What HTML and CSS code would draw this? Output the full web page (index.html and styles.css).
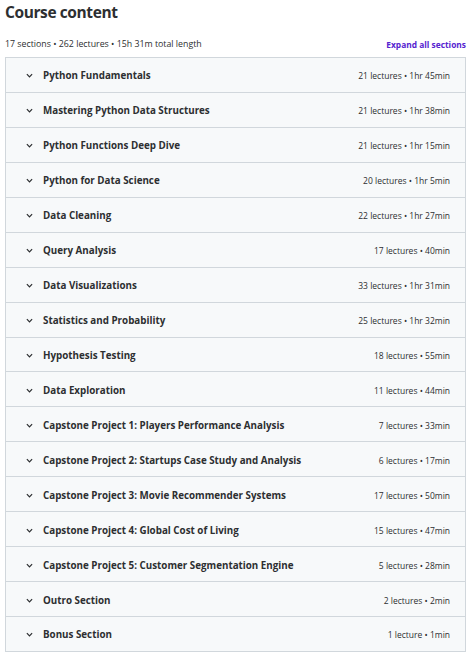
FILE: index.html
```html
<!DOCTYPE html>
<html lang="en">
<head>
<meta charset="utf-8">
<title>Course content</title>
<link rel="stylesheet" href="styles.css">
</head>
<body>
<div class="page">
  <h2 class="title">Course content</h2>
  <div class="summary">
    <span class="stats">17 sections • 262 lectures • 15h 31m total length</span>
    <button class="expand">Expand all sections</button>
  </div>
  <div class="sections">
    <div class="row"><span class="chev"><svg viewBox="0 0 8 5" width="7" height="5"><path d="M1 1l3 3 3-3" fill="none" stroke="#2d2f31" stroke-width="1.4"/></svg></span><span class="name">Python Fundamentals</span><span class="meta">21 lectures • 1hr 45min</span></div>
    <div class="row"><span class="chev"><svg viewBox="0 0 8 5" width="7" height="5"><path d="M1 1l3 3 3-3" fill="none" stroke="#2d2f31" stroke-width="1.4"/></svg></span><span class="name">Mastering Python Data Structures</span><span class="meta">21 lectures • 1hr 38min</span></div>
    <div class="row"><span class="chev"><svg viewBox="0 0 8 5" width="7" height="5"><path d="M1 1l3 3 3-3" fill="none" stroke="#2d2f31" stroke-width="1.4"/></svg></span><span class="name">Python Functions Deep Dive</span><span class="meta">21 lectures • 1hr 15min</span></div>
    <div class="row"><span class="chev"><svg viewBox="0 0 8 5" width="7" height="5"><path d="M1 1l3 3 3-3" fill="none" stroke="#2d2f31" stroke-width="1.4"/></svg></span><span class="name">Python for Data Science</span><span class="meta">20 lectures • 1hr 5min</span></div>
    <div class="row"><span class="chev"><svg viewBox="0 0 8 5" width="7" height="5"><path d="M1 1l3 3 3-3" fill="none" stroke="#2d2f31" stroke-width="1.4"/></svg></span><span class="name">Data Cleaning</span><span class="meta">22 lectures • 1hr 27min</span></div>
    <div class="row"><span class="chev"><svg viewBox="0 0 8 5" width="7" height="5"><path d="M1 1l3 3 3-3" fill="none" stroke="#2d2f31" stroke-width="1.4"/></svg></span><span class="name">Query Analysis</span><span class="meta">17 lectures • 40min</span></div>
    <div class="row"><span class="chev"><svg viewBox="0 0 8 5" width="7" height="5"><path d="M1 1l3 3 3-3" fill="none" stroke="#2d2f31" stroke-width="1.4"/></svg></span><span class="name">Data Visualizations</span><span class="meta">33 lectures • 1hr 31min</span></div>
    <div class="row"><span class="chev"><svg viewBox="0 0 8 5" width="7" height="5"><path d="M1 1l3 3 3-3" fill="none" stroke="#2d2f31" stroke-width="1.4"/></svg></span><span class="name">Statistics and Probability</span><span class="meta">25 lectures • 1hr 32min</span></div>
    <div class="row"><span class="chev"><svg viewBox="0 0 8 5" width="7" height="5"><path d="M1 1l3 3 3-3" fill="none" stroke="#2d2f31" stroke-width="1.4"/></svg></span><span class="name">Hypothesis Testing</span><span class="meta">18 lectures • 55min</span></div>
    <div class="row"><span class="chev"><svg viewBox="0 0 8 5" width="7" height="5"><path d="M1 1l3 3 3-3" fill="none" stroke="#2d2f31" stroke-width="1.4"/></svg></span><span class="name">Data Exploration</span><span class="meta">11 lectures • 44min</span></div>
    <div class="row"><span class="chev"><svg viewBox="0 0 8 5" width="7" height="5"><path d="M1 1l3 3 3-3" fill="none" stroke="#2d2f31" stroke-width="1.4"/></svg></span><span class="name">Capstone Project 1: Players Performance Analysis</span><span class="meta">7 lectures • 33min</span></div>
    <div class="row"><span class="chev"><svg viewBox="0 0 8 5" width="7" height="5"><path d="M1 1l3 3 3-3" fill="none" stroke="#2d2f31" stroke-width="1.4"/></svg></span><span class="name">Capstone Project 2: Startups Case Study and Analysis</span><span class="meta">6 lectures • 17min</span></div>
    <div class="row"><span class="chev"><svg viewBox="0 0 8 5" width="7" height="5"><path d="M1 1l3 3 3-3" fill="none" stroke="#2d2f31" stroke-width="1.4"/></svg></span><span class="name">Capstone Project 3: Movie Recommender Systems</span><span class="meta">17 lectures • 50min</span></div>
    <div class="row"><span class="chev"><svg viewBox="0 0 8 5" width="7" height="5"><path d="M1 1l3 3 3-3" fill="none" stroke="#2d2f31" stroke-width="1.4"/></svg></span><span class="name">Capstone Project 4: Global Cost of Living</span><span class="meta">15 lectures • 47min</span></div>
    <div class="row"><span class="chev"><svg viewBox="0 0 8 5" width="7" height="5"><path d="M1 1l3 3 3-3" fill="none" stroke="#2d2f31" stroke-width="1.4"/></svg></span><span class="name">Capstone Project 5: Customer Segmentation Engine</span><span class="meta">5 lectures • 28min</span></div>
    <div class="row"><span class="chev"><svg viewBox="0 0 8 5" width="7" height="5"><path d="M1 1l3 3 3-3" fill="none" stroke="#2d2f31" stroke-width="1.4"/></svg></span><span class="name">Outro Section</span><span class="meta">2 lectures • 2min</span></div>
    <div class="row"><span class="chev"><svg viewBox="0 0 8 5" width="7" height="5"><path d="M1 1l3 3 3-3" fill="none" stroke="#2d2f31" stroke-width="1.4"/></svg></span><span class="name">Bonus Section</span><span class="meta">1 lecture • 1min</span></div>
  </div>
</div>
</body>
</html>
```

FILE: styles.css
```css
* { box-sizing: border-box; }
html, body { margin: 0; padding: 0; background: #fff; }
body {
  font-family: "Open Sans", "Noto Sans", "Liberation Sans", sans-serif;
  color: #2d2f31;
}
.page { padding: 0 8px 0 5px; }
.title {
  margin: 0;
  padding-top: 1px;
  font-size: 15.5px;
  letter-spacing: -0.4px;
  font-weight: 700;
  line-height: 22px;
  height: 36px;
}
.summary {
  display: flex;
  justify-content: space-between;
  align-items: center;
  height: 16px;
  margin-bottom: 5px;
}
.stats { font-size: 8.8px; color: #2d2f31; }
.expand {
  border: 0;
  background: none;
  padding: 0;
  font-family: inherit;
  font-size: 8.4px;
  font-weight: 700;
  color: #5624d0;
}
.sections {
  width: 461px;
  border: 1px solid #d1d7dc;
  border-bottom: 0;
}
.row {
  display: flex;
  align-items: center;
  height: 34.94px;
  background: #f7f9fa;
  border-bottom: 1px solid #d1d7dc;
  padding: 2px 15px 0 20px;
}
.chev { width: 17px; display: flex; align-items: center; }
.chev svg { display: block; }
.name {
  flex: 1;
  font-size: 9.8px;
  font-weight: 700;
}
.meta { font-size: 8.5px; color: #2d2f31; }
```
